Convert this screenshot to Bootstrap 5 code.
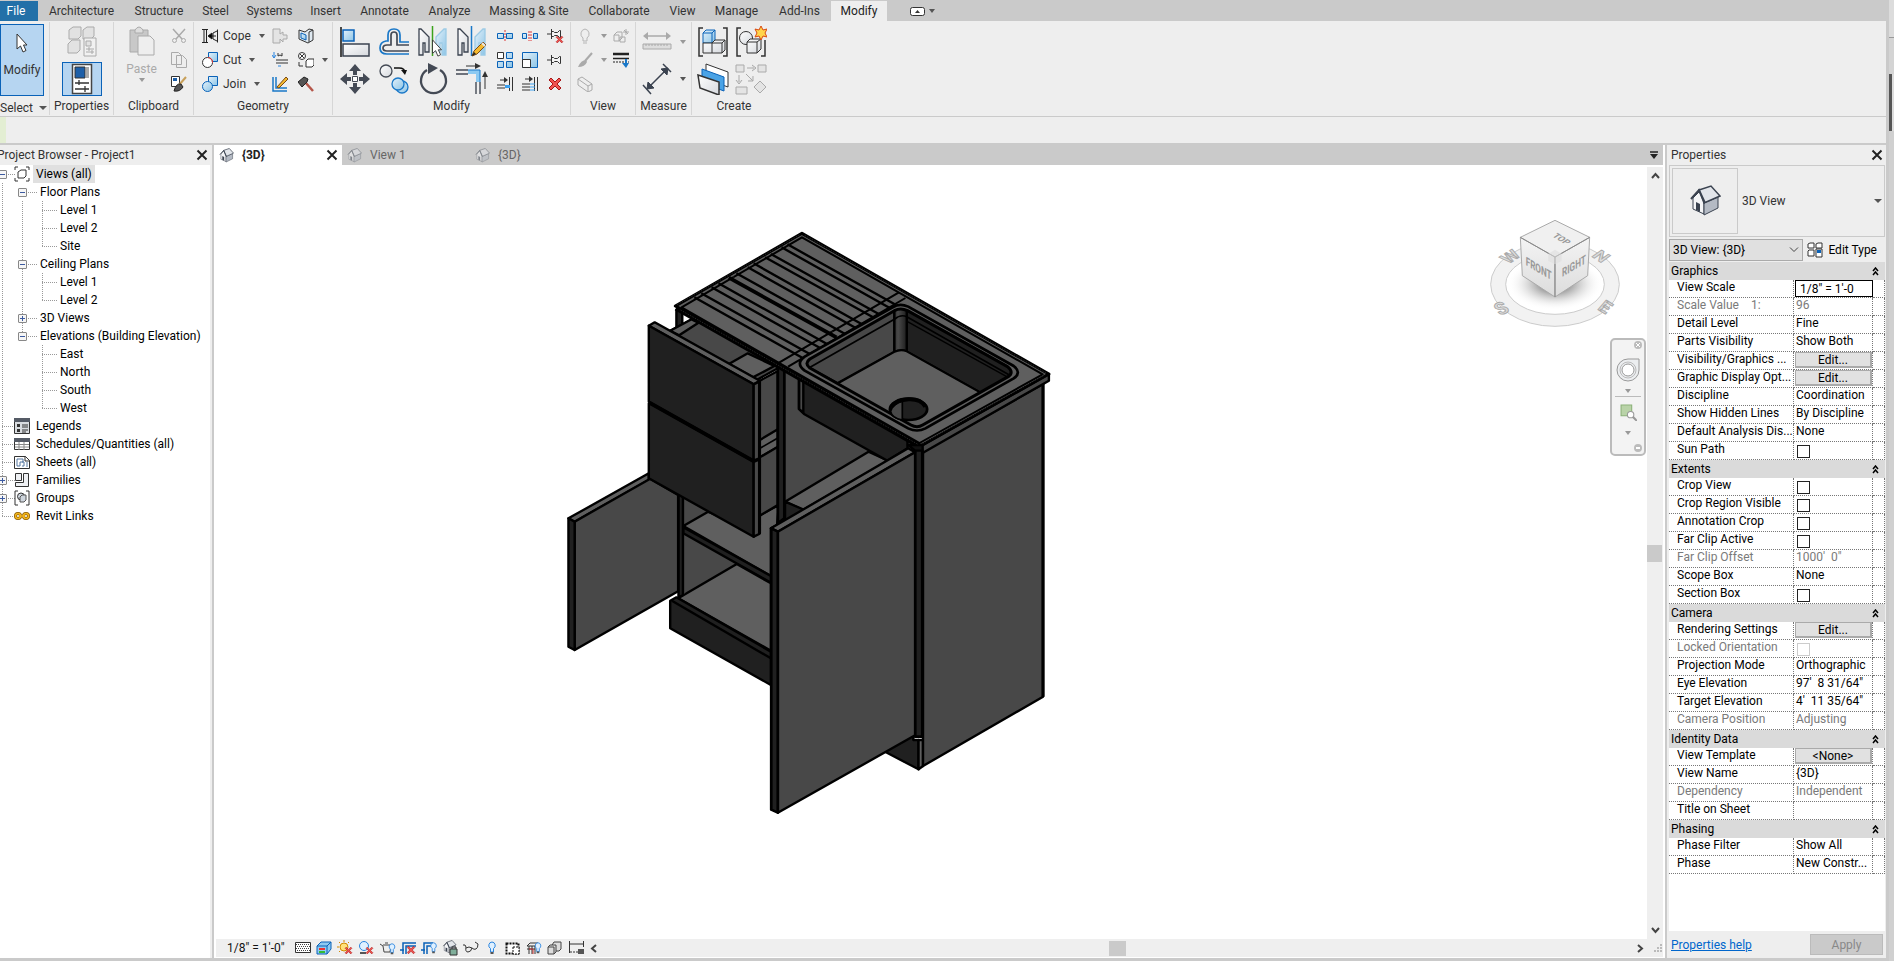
<!DOCTYPE html>
<html lang="en">
<head>
<meta charset="utf-8">
<meta name="viewport" content="width=device-width, initial-scale=1">
<title>Project1 - 3D View: {3D}</title>
<link href="https://cdn.jsdelivr.net/npm/bootstrap@5.3.0/dist/css/bootstrap.min.css" rel="stylesheet">
<style>
:root{--line:#cacaca;--chrome:#eee;--ink:#333}
body{font-family:Roboto,"Noto Sans",sans-serif;font-size:12px;line-height:18px;color:var(--ink);background:var(--line);overflow:hidden}
button{font:inherit;color:inherit;background:none;border:0;padding:0}
svg{display:block;flex:none}
.edge{width:8px;background:#dcdcdc;border-left:3px solid var(--line)}
.edge-top{height:38px;border-bottom:1px solid #999}
.edge-mid{height:36px;background:#d4d4d4}
.edge-thumb{width:3px;height:57px;background:#555}
.edge-rest{background:#d0d0d0}
/* menu tabs */
.menu-tabs{display:grid;grid-template-columns:38px 87px 68px 45px 63px 49px 69px 61px 98px 82px 45px 63px 63px 56px 64px;height:21px;background:var(--line);padding-top:1px;justify-content:start}
.menu-tabs button{white-space:nowrap;line-height:20px}
.menu-tabs .file-tab{background:#2270a8;color:#fff;padding-right:6px}
.menu-tabs .current{background:var(--chrome);color:#222}
/* ribbon */
.ribbon{height:96px;background:var(--chrome);border-bottom:1px solid var(--line)}
.rpanel{border-right:1px solid #d6d6d6;margin-top:1px;height:93px}
.rpanel:last-child{border:0}
.rbody{height:75px}
.rlabel{height:18px;text-align:center;white-space:nowrap}
.w49{width:50px}.w63{width:64px}.w80{width:80px}.w139{width:139px}.w238{width:238px}.w65{width:65px}.w56{width:56px}.w86{width:84px}
.rows3{display:grid;grid-auto-rows:24px;padding-top:2px;align-items:center;justify-items:start}
.rows2{display:grid;grid-auto-rows:37px;padding-top:1px;align-items:center;justify-items:center}
.gap6{padding-left:6px}
.gap2{padding-left:2px}
.tool{display:flex;align-items:center;gap:5px;white-space:nowrap}
.tool .caret{margin-left:3px}
.picked{border:1px solid #0a62b8;background:#b6d5f1}
.mod-btn{width:44px;height:72px;margin-top:2px}
.paste-btn{width:53px;padding-left:2px}
.faded{color:#aaa}
.caret{display:inline-block;border:3px solid transparent;border-top:4px solid #555;border-bottom:0}
.caret.wide{border-left-width:4px;border-right-width:4px;vertical-align:2px}
.faded .caret{border-top-color:#999}
.options{height:28px;background:var(--chrome);border-bottom:2px solid var(--line)}
.options i{display:block;width:6px;height:26px;background:#e3eed3}
.cols-geo{grid-template-columns:70px 26px 1fr}
.cols-big{grid-template-columns:repeat(4,39px)}
.cols-small{grid-template-columns:repeat(3,25px)}
.cols-view{grid-template-columns:36px 1fr}
.cols-create{grid-template-columns:repeat(2,38px)}
/* side panels */
.browser{width:214px;background:#fff;border-right:2px solid var(--line);flex:none}
.ptitle{height:20px;background:var(--chrome);line-height:20px;color:var(--ink)}
.tree-wrap{border-right:2px solid var(--chrome)}
.tree{color:#000;list-style:none;margin:0;padding:0 0 0 2px}
.tree li{display:flex;height:18px;align-items:center;white-space:nowrap}
.cell0,.cell1,.cell2{height:18px;flex:none;display:flex;align-items:center}
.cell0,.cell1{width:20px}.cell2{width:18px}
.short{width:13px}
.v{background:repeating-linear-gradient(#999 0 1px,transparent 1px 2px) 0 0/1px 100% no-repeat}
.h{background:repeating-linear-gradient(90deg,#999 0 1px,transparent 1px 2px) 0 9px/15px 1px no-repeat}
.v.h{background:repeating-linear-gradient(#999 0 1px,transparent 1px 2px) 0 0/1px 100% no-repeat,repeating-linear-gradient(90deg,#999 0 1px,transparent 1px 2px) 0 9px/15px 1px no-repeat}
.v.h.stop{background-size:1px 50%,15px 1px}
.tog{width:9px;height:9px;margin-left:-4px;border:1px solid #888;border-radius:1px;background:linear-gradient(#3c5aa0,#3c5aa0) 1px 3px/5px 1px no-repeat,#f6f6f6;flex:none}
.tog.plus{background:linear-gradient(#3c5aa0,#3c5aa0) 1px 3px/5px 1px no-repeat,linear-gradient(#3c5aa0,#3c5aa0) 3px 1px/1px 5px no-repeat,#f6f6f6}
.tree b{font-weight:400;padding:0 3px;line-height:18px}
.tree .chosen{background:#e0e0e0}
.tree svg{width:16px;height:16px;margin:0 3px 0 -1px}
/* drawing area */
.vtabs{height:20px;background:var(--line);margin-right:2px}
.vtab{width:128px;height:20px;padding:0 9px 0 5px;color:#666}
.vtab.on{background:#fff;color:#222;padding-right:4px}
.vtab .name{margin-left:8px}
.canvas{position:relative;background:#fff;min-height:0}
.model{position:absolute;left:351px;top:62px}
.cube{position:absolute;right:26px;top:52px}
.navbox{position:absolute;right:1px;top:173px;width:36px;height:118px;border:2px solid #bbb;border-radius:5px;background:#f3f3f3}
.vscroll{width:16px;background:#efefef;margin:2px 2px 0 0}
.vthumb{height:17px;width:15px;background:#cacaca}
.viewbar{height:18px;background:#efefef;color:#111;margin:0 2px 1px 2px}
.viewbar .scale{width:68px;margin-left:11px;text-align:left;white-space:nowrap}
.viewbar .ic{width:21px}
.hthumb{width:17px;height:15px;background:#cacaca}
/* properties */
.props{width:221px;background:var(--chrome);border-left:2px solid var(--line);flex:none;color:#000;padding:0 1px 0 2px}
.props .ptitle,.pfoot{padding:0 2px}
.ptype{height:72px;border:1px solid var(--line);padding:2px;color:var(--ink)}
.pthumb{width:66px;height:66px;border:1px solid var(--line)}
.psel-row{height:25px}
.pselect{width:134px;height:22px;border:1px solid #aaa;background:#e0e0e0 url("data:image/svg+xml,%3Csvg xmlns='http://www.w3.org/2000/svg' width='10' height='6'%3E%3Cpath d='M1 .5l4 4 4-4' fill='none' stroke='%23444'/%3E%3C/svg%3E") no-repeat right 3px center;appearance:none;line-height:20px;padding:0 3px;border-radius:0}
.grid-box{background:#fff}
.ptab{width:100%;table-layout:fixed;border-collapse:separate;border-spacing:0;background:#fff}
.c-name{width:125px}.c-pin{width:12px}
.ptab th,.ptab td{height:18px;padding:0;line-height:15px;font-weight:400;white-space:nowrap;vertical-align:top}
.ptab .grp th{background:#dadada;padding:0 6px 0 2px;line-height:18px;border:0}
.ptab tbody tr:not(.grp)>*{border-bottom:1px dotted #777;border-right:1px dotted #777}
.ptab tr:not(.grp) th{padding-left:8px}
.ptab td{padding-left:2px}
.ptab .off{color:#7a7a7a}
.ptab td.ctl{padding:0 0 0 1px}
.ebtn{display:block;width:77px;height:16px;line-height:14px;background:#e1e1e1;border:1px solid #aaa;border-right-width:2px;border-bottom-width:2px}
.vsel{display:block;width:78px;height:17px;border:1px solid #000;background:#fff;padding:0 4px;line-height:14px;color:#000;border-radius:0}
.ptab input[type=checkbox]{display:block;appearance:none;width:13px;height:13px;border:1px solid #222;margin:3px 0 0 2px;background:#fff}
.ptab input[type=checkbox]:disabled{border-color:#ccc}
.pfoot{height:27px}
.pfoot a{color:#06c}
.apply{width:73px;height:21px;background:#cacaca;border:1px solid #bbb;color:#888}
.status{height:3px;background:var(--line)}
.min0{min-width:0;min-height:0}
</style>
</head>
<body>
<svg width="0" height="0" class="position-absolute" aria-hidden="true">
<defs>
<linearGradient id="gb" x1="0" y1="0" x2="1" y2="1"><stop offset="0" stop-color="#e4f1fa"/><stop offset="1" stop-color="#8cc4e6"/></linearGradient>
<linearGradient id="gw" x1="0" y1="0" x2="1" y2="1"><stop offset="0" stop-color="#fff"/><stop offset="1" stop-color="#d5d8dd"/></linearGradient>
<linearGradient id="corner"><stop offset="0" stop-color="#333"/><stop offset=".3" stop-color="#4a4a4a"/><stop offset="1" stop-color="#1c1c1c"/></linearGradient>
<radialGradient id="shade"><stop offset=".3" stop-color="#999"/><stop offset="1" stop-color="#fff" stop-opacity="0"/></radialGradient>
<linearGradient id="cf" x1="0" y1="0" x2="0" y2="1"><stop offset="0" stop-color="#f4f4f4"/><stop offset="1" stop-color="#dcdcdc"/></linearGradient>
<symbol id="x" viewBox="0 0 12 12"><path d="M1.500 1.500l9 9M10.500 1.500l-9 9" stroke="#222" stroke-width="2" fill="none"/></symbol>
<symbol id="house" viewBox="0 0 32 32"><path d="M4 13l7-7 4 8v15L4 24z" fill="#f4f5f7" stroke="#3b4350"/><path d="M15 18l14-6v11l-14 7z" fill="#b4bac4" stroke="#3b4350"/><path d="M10 5l12-4 9 10-16 7z" fill="#e2e5ea" stroke="#3b4350" stroke-width="1.500"/><path d="M2 14l8-9 6 13" fill="none" stroke="#3b4350" stroke-width="2"/><path d="M7 17l4 2v8l-4-2z" fill="#3b4350"/></symbol>
<symbol id="align" viewBox="0 0 32 32"><path d="M2 1v30" stroke="#111" stroke-width="1.500"/><path d="M4 4h11v11H4z" fill="url(#gb)" stroke="#0a62b8" stroke-width="1.500"/><path d="M4 18h26v12H4z" fill="url(#gw)" stroke="#3b4350" stroke-width="1.500"/></symbol>
<symbol id="offset" viewBox="0 0 32 32" fill="none"><path d="M31 16h-9V9q0-6-6-6t-6 6v6H8q-6 1-6 7t7 6h22" stroke="#1a78c8" stroke-width="1.700"/><path d="M31 19H19V9q0-3-3-3t-3 3v10H9q-4 0-4 3t4 3h22" stroke="#444a55" stroke-width="1.700"/></symbol>
<symbol id="mirror" viewBox="0 0 32 32"><path d="M2 3h2l8 8v15H8v-9H6v12H2z" fill="url(#gw)" stroke="#3b4350" stroke-width="1.300"/><path d="M29 3h-2l-8 8v15h4v-9h2v12h4z" fill="url(#gb)" stroke="#9ccbe6" stroke-width="1.300"/></symbol>
<symbol id="cursor" viewBox="0 0 12 20"><path d="M1 1v15l3.500-3 2.500 6 3-1.500L7.500 12H11z" fill="#fff" stroke="#333"/></symbol>
<symbol id="pencil" viewBox="0 0 16 16"><path d="M1 15l2-5 9-9 3 3-9 9z" fill="#f5b92e" stroke="#7a4a16"/><path d="M11 2l3 3" stroke="#e6e6e6" stroke-width="2"/><path d="M1 15l2-4 2 2z" fill="#222"/></symbol>
<symbol id="move" viewBox="0 0 32 32"><path d="M16 1l6 7h-4v4h-4V8h-4zM16 31l6-7h-4v-4h-4v4h-4zM1 16l7-6v4h4v4H8v4zM31 16l-7-6v4h-4v4h4v4z" fill="#444a55"/><path d="M13.500 13.500h5v5h-5z" fill="#fff" stroke="#444a55"/></symbol>
<symbol id="copyt" viewBox="0 0 32 32"><circle cx="8" cy="8" r="6" fill="url(#gw)" stroke="#444a55" stroke-width="1.300"/><path d="M16 5h5q6 0 6 5" fill="none" stroke="#111" stroke-width="1.500"/><path d="M23 7h6l-2 5z" fill="#111"/><circle cx="24" cy="24" r="6" fill="url(#gb)" stroke="#1a78c8" stroke-width="1.300"/><circle cx="20" cy="21" r="6" fill="url(#gb)" stroke="#1a78c8" stroke-width="1.300"/></symbol>
<symbol id="rotate" viewBox="0 0 32 32"><path d="M10 7A12.500 12.500 0 1 0 23 7" fill="none" stroke="#444a55" stroke-width="2.300"/><path d="M11 0l10 5-10 6z" fill="#444a55"/></symbol>
<symbol id="trim" viewBox="0 0 32 32" fill="none"><path d="M10 3h12M29 14v12" stroke="#333"/><path d="M19 0l6 3-6 3zM29 8l3 6h-6z" fill="#333"/><path d="M0 7h12M0 11h12M20 19v12M24 19v12" stroke="#444a55" stroke-width="1.400"/><path d="M12 9h10v10" stroke="#8ccaf2" stroke-width="4"/><path d="M12 7h12v12" stroke="#1a78c8"/></symbol>
<symbol id="split" viewBox="0 0 16 16"><path d="M.5 5.500h6v5h-6zM9.500 5.500h6v5h-6z" fill="url(#gb)" stroke="#0a62b8"/><path d="M8 2v12" stroke="#d33" stroke-dasharray="2 1"/></symbol>
<symbol id="splitg" viewBox="0 0 16 16"><path d="M.5 5.500h4v5h-4zM11.500 5.500h4v5h-4z" fill="url(#gb)" stroke="#0a62b8"/><path d="M7 3v10M9 3v10" stroke="#d33" stroke-dasharray="2 1"/></symbol>
<symbol id="pin" viewBox="0 0 16 16"><path d="M0 8h4M4.500 3v10M4.500 5.500h2l1 1h3l2-2h1v7h-1l-2-2h-3l-1 1h-2" fill="#f4f4f4" stroke="#333"/></symbol>
<symbol id="redx" viewBox="0 0 16 16"><path d="M2 4l2-2 4 4 4-4 2 2-4 4 4 4-2 2-4-4-4 4-2-2 4-4z" fill="#ef5350" stroke="#a81515"/></symbol>
<symbol id="array" viewBox="0 0 16 16"><path d="M.5.500h6v6h-6z" fill="#fff" stroke="#333"/><path d="M9.500.500h6v6h-6zM.5 9.500h6v6h-6zM9.500 9.500h6v6h-6z" fill="url(#gb)" stroke="#0a62b8"/></symbol>
<symbol id="scale" viewBox="0 0 16 16"><path d="M.5.500h15v15H.500z" fill="url(#gb)" stroke="#0a62b8"/><path d="M.5 7.500h8v8h-8z" fill="#fff" stroke="#333"/></symbol>
<symbol id="ext" viewBox="0 0 16 16"><path d="M3 4h6M12.500 1v14M15.500 1v14M0 9h8M0 12h8" stroke="#333"/><path d="M7 1l4 3-4 3z" fill="#333"/><path d="M8 10.500h5" stroke="#3aa0f0" stroke-width="3"/></symbol>
<symbol id="ext2" viewBox="0 0 16 16"><path d="M3 3h6M12.500 1v14M15.500 1v14M0 8h8M0 11h8M0 14h8" stroke="#333"/><path d="M7 0l4 3-4 3z" fill="#333"/><path d="M8 8h5M8 11h5M8 14h5" stroke="#3aa0f0"/></symbol>
<symbol id="boxes" viewBox="0 0 32 32" fill="#e2e2e2" stroke="#aaa"><path d="M3 4l4-3h8v9l-3 3H3zM17 4l4-3h7v9l-3 3h-8zM2 18l4-4h8v10l-3 3H2z"/><path d="M18 12h12v18H18z" fill="#f1f1f1"/><path d="M20 15h5v5h-5zM20 23h8M20 26h8M23 21v4M26 24v4"/></symbol>
<symbol id="propi" viewBox="0 0 22 32"><path d="M1.500 1.500h19v29h-19z" fill="#fff" stroke="#444" stroke-width="1.500"/><path d="M4 4h10v11H4z" fill="#1d5fa8" stroke="#333"/><path d="M15 4h3v11h-3z" fill="#aaa"/><path d="M4 20h14M4 26h14M8 17v5M14 23v6" stroke="#333" stroke-width="1.300"/></symbol>
<symbol id="paste" viewBox="0 0 26 30"><path d="M1 4h18v22H1z" fill="#c8c8c8" stroke="#aaa"/><path d="M6 4q4-6 8 0v3H6z" fill="#ddd" stroke="#aaa"/><path d="M9 10h12l4 4v15H9z" fill="#eee" stroke="#aaa"/></symbol>
<symbol id="cut" viewBox="0 0 16 16" fill="none" stroke="#aaa"><path d="M2 1l9 10M14 1L5 11" stroke-width="1.500"/><circle cx="3.500" cy="12.500" r="2"/><circle cx="12.500" cy="12.500" r="2"/></symbol>
<symbol id="copy" viewBox="0 0 16 16"><path d="M.5.500h7l3 3v9h-10zM5.500 3.500h6l4 4v8h-10z" fill="#eee" stroke="#aaa"/></symbol>
<symbol id="match" viewBox="0 0 16 16"><path d="M.5.500h8v10h-8z" fill="#fff" stroke="#333"/><path d="M2 2h4v3H2z" fill="#1d5fa8"/><path d="M15 1L8 9" stroke="#c8a05a" stroke-width="2"/><path d="M10 8q-5-1-7 7 6 1 9-4z" fill="#555" stroke="#222"/></symbol>
<symbol id="cope" viewBox="0 0 16 16" fill="none" stroke="#222"><path d="M0 1.500h6M0 14.500h6M2 2v12M4.500 2v12M8 8h6"/><path d="M15.500 1.500v13M15 3l-4 2v6l4 2"/><path d="M6 8l4-3v6z" fill="#000"/></symbol>
<symbol id="cutg" viewBox="0 0 16 16"><path d="M6.500.500h9v9h-9z" fill="url(#gb)" stroke="#0a62b8"/><circle cx="5.500" cy="10.500" r="5" fill="#fff" stroke="#333"/><path d="M6 5.500a5 5 0 0 1 4.500 5" fill="none" stroke="#e33"/></symbol>
<symbol id="join" viewBox="0 0 16 16"><path d="M6.500.500h9v9h-9z" fill="url(#gb)" stroke="#0a62b8"/><circle cx="5.500" cy="10.500" r="5" fill="url(#gb)" stroke="#0a62b8"/></symbol>
<symbol id="g1" viewBox="0 0 16 16"><path d="M1 1h7v5l3-2v3h4v4h-4v3l-3-3v4H1z" fill="#e4e4e4" stroke="#aaa"/></symbol>
<symbol id="g2" viewBox="0 0 16 16" fill="none"><path d="M2 0v6M0 3l2 3 2-3M6 14h3" stroke="#2a85e0"/><path d="M6 1v3l2-1 2 1V1M4 8h12M4 11h12" stroke="#333"/></symbol>
<symbol id="g3" viewBox="0 0 16 16"><path d="M1 1v14h14M4 1v11h11" fill="none" stroke="#1a78c8" stroke-width="1.500"/><path d="M5 11L14 1l2 2L7 12z" fill="#f5b92e" stroke="#7a4a16"/></symbol>
<symbol id="g4" viewBox="0 0 16 16"><path d="M1 2l6 2 4-3 4 1v10l-5 3-9-4z" fill="#dfe9f1" stroke="#333"/><path d="M11 4v10M11 4l4-2" stroke="#333" fill="none"/><path d="M3 5l5 2v5l-5-2z" fill="url(#gb)" stroke="#0a62b8"/></symbol>
<symbol id="g5" viewBox="0 0 16 16"><circle cx="4" cy="4" r="3.500" fill="#fff" stroke="#333"/><path d="M2 2l4 4M6 2L2 6M1 10v4h4" stroke="#333" fill="none"/><path d="M8 9l2-2h6v6l-2 2H8z" fill="#fff" stroke="#333"/></symbol>
<symbol id="hammer" viewBox="0 0 16 16"><path d="M7 6l8 9" stroke="#b5564a" stroke-width="2.500"/><path d="M0 6l6-5 4 2-1 3-5 5z" fill="#555" stroke="#222"/></symbol>
<symbol id="bulb" viewBox="0 0 16 16"><path d="M8 1a5 5 0 0 1 2 9v3H6v-3a5 5 0 0 1 2-9zM6 15h4" fill="#eee" stroke="#b5b5b5"/></symbol>
<symbol id="brush" viewBox="0 0 16 16"><path d="M15 1L8 9" stroke="#aaa" stroke-width="2"/><path d="M9 8q-5 0-8 7 7 0 9-5z" fill="#aaa"/></symbol>
<symbol id="gbox" viewBox="0 0 16 16"><path d="M1 3l4-2 10 7v6l-4 2L1 9zM1 3l10 7v6M11 10l4-2" fill="#eee" stroke="#aaa"/></symbol>
<symbol id="gbox2" viewBox="0 0 16 16"><path d="M1 7l3-3h5v6l-3 3H1zM1 7h5v6M7 9h5v5H7zM13 1v6M10 4h6M11 2l4 4" fill="none" stroke="#aaa"/></symbol>
<symbol id="thin" viewBox="0 0 16 16"><path d="M0 2h16" stroke="#222" stroke-width="2.500"/><path d="M0 6.500h16" stroke="#222" stroke-width="1.500"/><path d="M0 10h16" stroke="#222" stroke-dasharray="2 1"/><path d="M12 7v4h-3l4 5 3-5h-2V7z" fill="#1a78c8"/></symbol>
<symbol id="ruler" viewBox="0 0 30 32"><path d="M3 10h24" stroke="#aaa" stroke-width="1.500"/><path d="M6 6l-5 4 5 4zM24 6l5 4-5 4z" fill="#aaa"/><path d="M1 18h28v5H1z" fill="#ddd" stroke="#aaa"/><path d="M4 18v2M7 18v2M10 18v2M13 18v2M16 18v2M19 18v2M22 18v2M25 18v2" stroke="#aaa"/></symbol>
<symbol id="dim" viewBox="0 0 30 32" stroke="#3b4350"><path d="M6 25L25 6M1 22l8 9M21 1l8 8" fill="none" stroke-width="1.500"/><path d="M5 26l1-7 6 6zM26 5l-7 1 6 6z" fill="#3b4350"/></symbol>
<symbol id="c1" viewBox="0 0 32 32"><path d="M6 2H2v28h4M26 2h4v28h-4" fill="none" stroke="#333" stroke-width="1.500"/><path d="M6 7l3-3h9v10l-3 3H6z" fill="url(#gb)" stroke="#0a62b8"/><path d="M6 7h9v10M15 7l3-3" fill="none" stroke="#0a62b8"/><path d="M6 17h9l3-3h10v10l-3 3H6z" fill="url(#gw)" stroke="#333"/><path d="M15 17v10M15 17h10v10M25 17l3-3" fill="none" stroke="#333"/></symbol>
<symbol id="c2" viewBox="0 0 32 32"><path d="M6 2H2v28h4M26 30h4V14" fill="none" stroke="#333" stroke-width="1.500"/><circle cx="11" cy="12" r="6.500" fill="url(#gw)" stroke="#333"/><path d="M12 16l3-3h11v10l-4 4H12zM12 16h10v11M22 16l4-3" fill="url(#gw)" stroke="#333"/><path d="M26 0l2 4 4-1-2 4 2 4-4-1-2 4-2-4-4 1 2-4-2-4 4 1z" fill="#ffd54a" stroke="#d9480f"/></symbol>
<symbol id="c3" viewBox="0 0 32 32"><path d="M9 1l22 8v15L9 16z" fill="#fff" stroke="#333"/><path d="M5 6l22 8v14L5 20z" fill="#4aa3e6" stroke="#0a62b8"/><path d="M1 12l21 7v13L3 25z" fill="url(#gw)" stroke="#333" stroke-width="1.500"/></symbol>
<symbol id="c4" viewBox="0 0 32 32" fill="#e4e4e4" stroke="#aaa"><path d="M1 2h8v7H1zM23 2h8v7h-8zM1 24h11v7H1zM25 18l6 6-6 6-6-6zM12 5h7M17 2l4 3-4 3M4 12v7M1 17l3 4 3-4M11 11l7 7M18 13v5h-5"/></symbol>
<symbol id="magbox" viewBox="0 0 16 16"><path d="M1 1h10v10H1z" fill="#b9d3a8" stroke="#8bb178"/><circle cx="10" cy="10" r="3" fill="#fff" stroke="#999"/><path d="M12 12l4 4" stroke="#999" stroke-width="2"/></symbol>
<symbol id="sbulb" viewBox="0 0 16 16"><path d="M8 2a3.500 3.500 0 0 1 1.500 6.500V12h-3V8.500A3.500 3.500 0 0 1 8 2z" fill="#dff0ff" stroke="#2a85e0"/><path d="M6.500 12h3v2h-3z" fill="#555"/></symbol>
</defs>
</svg>

<div class="d-flex vh-100">
<div class="d-flex flex-column flex-fill min0">

<nav class="menu-tabs" aria-label="Ribbon tabs">
<button class="file-tab">File</button><button>Architecture</button><button>Structure</button><button>Steel</button><button>Systems</button><button>Insert</button><button>Annotate</button><button>Analyze</button><button>Massing &amp; Site</button><button>Collaborate</button><button>View</button><button>Manage</button><button>Add-Ins</button><button class="current">Modify</button>
<button class="d-flex align-items-center justify-content-end gap-1 pe-3" aria-label="Minimize ribbon"><svg width="15" height="9"><rect x=".5" y=".5" width="14" height="8" rx="2" fill="#fff" stroke="#333"/><path d="M5 6l2.500-3L10 6z" fill="#333"/></svg><span class="caret"></span></button>
</nav>

<div class="ribbon d-flex">
  <section class="rpanel w49">
    <div class="rbody"><button class="picked mod-btn d-flex flex-column align-items-center"><svg class="mt-2" width="12" height="20"><use href="#cursor"/></svg><span class="tool mt-2">Modify</span></button></div>
    <div class="rlabel text-start">Select &nbsp;<span class="caret wide"></span></div>
  </section>
  <section class="rpanel w63">
    <div class="rbody rows2"><button aria-label="Type properties"><svg width="32" height="32"><use href="#boxes"/></svg></button><button class="picked px-2" aria-label="Properties"><svg width="22" height="32"><use href="#propi"/></svg></button></div>
    <div class="rlabel">Properties</div>
  </section>
  <section class="rpanel w80">
    <div class="rbody d-flex">
      <button class="paste-btn faded d-flex flex-column align-items-center pt-1"><svg width="26" height="30"><use href="#paste"/></svg><span class="tool mt-1">Paste</span><span class="caret"></span></button>
      <div class="rows3 ps-1"><button aria-label="Cut"><svg width="16" height="16"><use href="#cut"/></svg></button><button aria-label="Copy"><svg width="16" height="16"><use href="#copy"/></svg></button><button aria-label="Match type"><svg width="16" height="16"><use href="#match"/></svg></button></div>
    </div>
    <div class="rlabel">Clipboard</div>
  </section>
  <section class="rpanel w139">
    <div class="rbody rows3 cols-geo ps-2">
      <button class="tool"><svg width="16" height="16"><use href="#cope"/></svg>Cope <span class="caret"></span></button><button aria-label="Wall joins"><svg width="16" height="16"><use href="#g1"/></svg></button><button aria-label="Split face"><svg width="16" height="16"><use href="#g4"/></svg></button>
      <button class="tool"><svg width="16" height="16"><use href="#cutg"/></svg>Cut <span class="caret"></span></button><button aria-label="Beam joins"><svg width="16" height="16"><use href="#g2"/></svg></button><button class="tool" aria-label="Paint"><svg width="16" height="16"><use href="#g5"/></svg><span class="caret"></span></button>
      <button class="tool"><svg width="16" height="16"><use href="#join"/></svg>Join <span class="caret"></span></button><button aria-label="Edit joins"><svg width="16" height="16"><use href="#g3"/></svg></button><button aria-label="Demolish"><svg width="16" height="16"><use href="#hammer"/></svg></button>
    </div>
    <div class="rlabel">Geometry</div>
  </section>
  <section class="rpanel w238">
    <div class="rbody d-flex">
      <div class="rows2 cols-big gap2">
        <button aria-label="Align"><svg width="32" height="32"><use href="#align"/></svg></button><button aria-label="Offset"><svg width="32" height="32"><use href="#offset"/></svg></button>
        <button aria-label="Mirror, pick axis"><svg width="32" height="32"><use href="#mirror"/><path d="M15.500 0v30" stroke="#3ba31c" stroke-width="1.500"/><use href="#cursor" x="14" y="13" width="12" height="18"/></svg></button>
        <button aria-label="Mirror, draw axis"><svg width="32" height="32"><use href="#mirror"/><path d="M15.500 0v30" stroke="#1a78c8" stroke-width="1.500"/><use href="#pencil" x="15" y="15" width="16" height="16"/></svg></button>
        <button aria-label="Move"><svg width="32" height="32"><use href="#move"/></svg></button><button aria-label="Copy"><svg width="32" height="32"><use href="#copyt"/></svg></button><button aria-label="Rotate"><svg width="32" height="32"><use href="#rotate"/></svg></button><button aria-label="Trim"><svg width="32" height="32"><use href="#trim"/></svg></button>
      </div>
      <div class="rows3 cols-small gap6">
        <button aria-label="Split"><svg width="16" height="16"><use href="#split"/></svg></button><button aria-label="Split with gap"><svg width="16" height="16"><use href="#splitg"/></svg></button><button aria-label="Unpin"><svg width="17" height="16"><use href="#pin" y="-2" width="16" height="16"/><use href="#redx" x="8" y="7" width="9" height="9"/></svg></button>
        <button aria-label="Array"><svg width="16" height="16"><use href="#array"/></svg></button><button aria-label="Scale"><svg width="16" height="16"><use href="#scale"/></svg></button><button aria-label="Pin"><svg width="16" height="16"><use href="#pin"/></svg></button>
        <button aria-label="Extend single"><svg width="16" height="16"><use href="#ext"/></svg></button><button aria-label="Extend multiple"><svg width="16" height="16"><use href="#ext2"/></svg></button><button aria-label="Delete"><svg width="16" height="16"><use href="#redx"/></svg></button>
      </div>
    </div>
    <div class="rlabel">Modify</div>
  </section>
  <section class="rpanel w65">
    <div class="rbody rows3 cols-view gap6">
      <button class="tool faded" aria-label="Hide"><svg width="16" height="16"><use href="#bulb"/></svg><span class="caret"></span></button><button aria-label="Selection box"><svg width="16" height="16"><use href="#gbox2"/></svg></button>
      <button class="tool faded" aria-label="Override"><svg width="16" height="16"><use href="#brush"/></svg><span class="caret"></span></button><button aria-label="Linework"><svg width="16" height="16"><use href="#thin"/></svg></button>
      <button aria-label="Displace"><svg width="16" height="16"><use href="#gbox"/></svg></button>
    </div>
    <div class="rlabel">View</div>
  </section>
  <section class="rpanel w56">
    <div class="rbody rows2"><button class="tool faded" aria-label="Measure"><svg width="30" height="32"><use href="#ruler"/></svg><span class="caret"></span></button><button class="tool" aria-label="Dimension"><svg width="30" height="32"><use href="#dim"/></svg><span class="caret"></span></button></div>
    <div class="rlabel">Measure</div>
  </section>
  <section class="rpanel w86">
    <div class="rbody rows2 cols-create gap2"><button aria-label="Create assembly"><svg width="32" height="32"><use href="#c1"/></svg></button><button aria-label="Create group"><svg width="32" height="32"><use href="#c2"/></svg></button><button aria-label="Create similar"><svg width="32" height="32"><use href="#c3"/></svg></button><button aria-label="Create parts"><svg width="32" height="32"><use href="#c4"/></svg></button></div>
    <div class="rlabel">Create</div>
  </section>
</div>
<div class="options"><i></i></div>

<main class="d-flex flex-fill min0">
<aside class="browser d-flex flex-column">
  <div class="ptitle d-flex align-items-center justify-content-between pe-1"><span style="text-indent:-3px">Project Browser - Project1</span><button aria-label="Close"><svg width="12" height="12"><use href="#x"/></svg></button></div>
  <div class="tree-wrap flex-fill">
  <ul class="tree">
    <li><span class="cell0 short h"><i class="tog"></i></span><svg viewBox="0 0 16 16"><path d="M4 1H1v3M12 1h3v3M4 15H1v-3M12 15h3v-3" fill="none" stroke="#333"/><path d="M4 6l3-2h5v6l-2 2H4z" fill="#fff" stroke="#333"/></svg><b class="chosen">Views (all)</b></li>
    <li><span class="cell0 v"></span><span class="cell2 h"><i class="tog"></i></span><b class="ps-0">Floor Plans</b></li>
    <li><span class="cell0 v"></span><span class="cell1 v"></span><span class="cell2 v h"></span><b class="ps-0">Level 1</b></li>
    <li><span class="cell0 v"></span><span class="cell1 v"></span><span class="cell2 v h"></span><b class="ps-0">Level 2</b></li>
    <li><span class="cell0 v"></span><span class="cell1 v"></span><span class="cell2 v h stop"></span><b class="ps-0">Site</b></li>
    <li><span class="cell0 v"></span><span class="cell2 v h"><i class="tog"></i></span><b class="ps-0">Ceiling Plans</b></li>
    <li><span class="cell0 v"></span><span class="cell1 v"></span><span class="cell2 v h"></span><b class="ps-0">Level 1</b></li>
    <li><span class="cell0 v"></span><span class="cell1 v"></span><span class="cell2 v h stop"></span><b class="ps-0">Level 2</b></li>
    <li><span class="cell0 v"></span><span class="cell2 v h"><i class="tog plus"></i></span><b class="ps-0">3D Views</b></li>
    <li><span class="cell0 v"></span><span class="cell2 v h stop"><i class="tog"></i></span><b class="ps-0">Elevations (Building Elevation)</b></li>
    <li><span class="cell0 v"></span><span class="cell1"></span><span class="cell2 v h"></span><b class="ps-0">East</b></li>
    <li><span class="cell0 v"></span><span class="cell1"></span><span class="cell2 v h"></span><b class="ps-0">North</b></li>
    <li><span class="cell0 v"></span><span class="cell1"></span><span class="cell2 v h"></span><b class="ps-0">South</b></li>
    <li><span class="cell0 v"></span><span class="cell1"></span><span class="cell2 v h stop"></span><b class="ps-0">West</b></li>
    <li><span class="cell0 short v h"></span><svg viewBox="0 0 16 16"><path d="M.5.500h15v15H.500z" fill="#d9dce0" stroke="#333"/><path d="M0 0h16v4H0z" fill="#555b66"/><path d="M3 6h3v3H3zM3 11h3v3H3z" fill="#333"/><path d="M8 7h6M8 9h6M8 12h6M8 14h4" stroke="#333"/></svg><b>Legends</b></li>
    <li><span class="cell0 short v h"></span><svg viewBox="0 0 16 16"><path d="M.5 2.500h15v11H.500z" fill="#fff" stroke="#333"/><path d="M0 2h16v4H0z" fill="#555b66"/><path d="M1 8.500h14M1 11h14M5 6v8M10 6v8" stroke="#888"/></svg><b>Schedules/Quantities (all)</b></li>
    <li><span class="cell0 short v h"></span><svg viewBox="0 0 16 16"><path d="M.5 2.500h11l4 4v8H.500z" fill="#fff" stroke="#333"/><path d="M3 5h6v3H6v4H3zM8 8h2v4H8M13 8v5" fill="none" stroke="#5577a0"/><path d="M11 2v5h5" stroke="#333" fill="none"/></svg><b>Sheets (all)</b></li>
    <li><span class="cell0 short v h"><i class="tog plus"></i></span><svg viewBox="0 0 16 16"><path d="M1.500 1.500h6v7h-6zM9.500 1.500h5v13h-13v-4h8z" fill="#eef0f3" stroke="#333"/></svg><b>Families</b></li>
    <li><span class="cell0 short v h"><i class="tog plus"></i></span><svg viewBox="0 0 16 16"><path d="M4 1H1v14h3M12 1h3v14h-3" fill="none" stroke="#333"/><circle cx="7" cy="6.500" r="3.500" fill="#cfd6de" stroke="#333"/><path d="M6 7l2-2h4v5l-2 2H6z" fill="#cfd6de" stroke="#555"/></svg><b>Groups</b></li>
    <li><span class="cell0 short v h stop"></span><svg viewBox="0 0 16 16" fill="none"><g stroke="#8a5c00" stroke-width="3"><rect x="1.500" y="5.500" width="5" height="5" rx="2.500"/><rect x="9.500" y="5.500" width="5" height="5" rx="2.500"/></g><g stroke="#f2b41c" stroke-width="1.500"><rect x="1.500" y="5.500" width="5" height="5" rx="2.500"/><rect x="9.500" y="5.500" width="5" height="5" rx="2.500"/><path d="M5 8h6"/></g></svg><b>Revit Links</b></li>
  </ul>
  </div>
</aside>

<section class="d-flex flex-column flex-fill bg-white min0">
  <div class="vtabs d-flex align-items-center">
    <div class="vtab on d-flex align-items-center"><svg width="15" height="15"><use href="#house"/></svg><span class="name fw-bold">{3D}</span><button class="ms-auto" aria-label="Close view"><svg width="12" height="12"><use href="#x"/></svg></button></div>
    <button class="vtab d-flex align-items-center"><svg width="15" height="15" opacity=".5"><use href="#house"/></svg><span class="name">View 1</span></button>
    <button class="vtab d-flex align-items-center"><svg width="15" height="15" opacity=".5"><use href="#house"/></svg><span class="name">{3D}</span></button>
    <button class="ms-auto me-1" aria-label="View list"><svg width="10" height="8"><path d="M1 1h8" stroke="#222" stroke-width="1.500"/><path d="M1 3h8L5 8z" fill="#222"/></svg></button>
  </div>
  <div class="d-flex flex-fill min0">
    <div class="canvas flex-fill">
      <svg class="model" width="507" height="590" viewBox="75 51 1470 1770" preserveAspectRatio="none" role="img" aria-label="Kitchen sink cabinet, isometric view" stroke="#000" stroke-width="7" stroke-linejoin="round">
        <!-- right side and plinth -->
        <path d="M1003 1625L1085 1570V1590H1100V1678z" fill="#202020"/>
        <path d="M1100 1590H1113V1668L1100 1678z" fill="#5f5f5f"/>
        <path d="M1113 725L1461 522V1460L1113 1668z" fill="#484848"/>
        <path d="M1461 522V1460" stroke-width="9"/>
        <path d="M1090 710H1111V1580H1090z" fill="#202020" stroke-width="8"/>
        <!-- sink bay -->
        <path d="M713 480L1090 700V730L765 905L713 940z" fill="#484848" stroke="none"/>
        <path d="M713 875L955 725L1012 752L765 900z" fill="#5f5f5f"/>
        <path d="M713 875L770 900L713 940z" fill="#202020"/>
        <path d="M753 500L1068 690V715L1010 752L768 612L753 597z" fill="#202020"/>
        <path d="M754 510H766V608L754 597z" fill="#484848"/>
        <!-- lower left bay -->
        <path d="M418 850L690 880V1110L418 1150z" fill="#484848" stroke="none"/>
        <path d="M418 948L490 905L640 970V915L695 885L690 945L672 955V1098z" fill="#5f5f5f"/>
        <path d="M418 952L672 1098V1118L418 970z" fill="#202020"/>
        <path d="M403 1165L573 1062L672 1120V1322z" fill="#5f5f5f"/>
        <path d="M380 1172L398 1162L672 1325V1425L380 1255z" fill="#202020"/>
        <path d="M385 1172L672 1345" stroke-width="7"/>
        <path d="M404 850H417V1155L404 1162z" fill="#202020"/>
        <!-- small door -->
        <path d="M85 925L318 790V810L103 935z" fill="#5f5f5f"/>
        <path d="M103 935L322 806L403 855V1144L103 1320z" fill="#484848"/>
        <path d="M85 925L103 935V1320L85 1310z" fill="#202020"/>
        <!-- drawers -->
        <path d="M398 300H415V350L398 356z" fill="#202020"/>
        <path d="M380 362L450 325L700 470L622 515z" fill="#484848"/>
        <path d="M380 362L442 328L462 338L406 376z" fill="#5f5f5f"/>
        <path d="M550 462L605 430L682 468L620 502z" fill="#5f5f5f"/>
        <path d="M640 512L692 483V690L640 745z" fill="#484848"/>
        <path d="M640 690L692 658V712L640 742z" fill="#5f5f5f"/>
        <path d="M640 715L692 684" stroke-width="5"/>
        <path d="M640 742L692 710V885L640 917z" fill="#484848"/>
        <path d="M318 347L335 337L640 512L622 523z" fill="#5f5f5f"/>
        <path d="M318 347L622 523V752L318 575z" fill="#202020"/>
        <path d="M622 523L638 515V745L622 752z" fill="#484848"/>
        <path d="M318 580L622 756V980L318 805z" fill="#202020"/>
        <path d="M622 756L638 748V972L622 980z" fill="#484848"/>
        <path d="M320 577L622 753" stroke-width="10"/>
        <path d="M692 470H711V925L692 940z" fill="#202020" stroke-width="8"/>
        <!-- large door -->
        <path d="M672 955L1070 715L1090 727L692 965z" fill="#5f5f5f"/>
        <path d="M692 965L1090 727V1576L692 1808z" fill="#484848"/>
        <path d="M673 955L692 965V1808L673 1799z" fill="#202020" stroke-width="8"/>
        <!-- worktop -->
        <path d="M1108 708L1478 492V512L1113 728z" fill="#484848"/>
        <path d="M395 288L762 70L1478 492L1105 708z" fill="#5f5f5f" stroke-width="9"/>
        <path d="M413 292L762 82L1460 493L1103 699z" fill="none" stroke-width="6"/>
        <path d="M397 294L1107 711" stroke-width="15"/><path d="M1070 705H1112V722H1090z" fill="#111"/>
        <path d="M410 300L1100 704M400 284L758 73M770 76L1470 489M1112 700L1465 495" stroke="#777" stroke-width="1" stroke-dasharray="4 4"/>
        <path d="M1042 248L692 460M1062 264L722 470" stroke-width="6"/>
        <path d="M720 103L1035 285M703 112L1018 295M672 132L986 313M655 142L968 322M622 160L936 343M605 172L918 354M572 190L886 371M520 220L836 403M500 232L816 415M470 250L786 433M450 262L768 446" stroke-width="7"/>
        <path d="M550 203L862 382" stroke-width="11"/><path d="M562 200L870 376" stroke="#666" stroke-width="1" stroke-dasharray="4 3"/>
        <!-- bowl -->
        <path d="M1025 292Q1045 278 1070 290L1376 468Q1400 488 1376 505L1120 655Q1096 668 1070 655L770 482Q742 460 770 440z" fill="#5f5f5f" stroke-width="8"/>
        <clipPath id="bowl"><path d="M1030 302Q1048 292 1068 302L1358 470Q1378 487 1360 500L1112 645Q1096 655 1078 645L785 474Q768 460 785 447z"/></clipPath>
        <g clip-path="url(#bowl)">
          <path d="M760 460L1030 290V425L865 520z" fill="#484848"/>
          <path d="M1066 285L1400 480L1280 548L1066 425z" fill="#202020"/>
          <path d="M1030 285H1066V424Q1048 416 1030 426z" fill="url(#corner)"/>
          <path d="M865 521L1030 426Q1048 416 1066 424L1280 548L1095 665z" fill="#5f5f5f" stroke-width="6"/>
          <path d="M775 478L1030 328Q1048 312 1066 320L1380 505" fill="none" stroke-width="5"/>
          <path d="M1068 335L1370 508" fill="none" stroke-width="4"/>
        </g>
        <path d="M1030 302Q1048 292 1068 302L1358 470Q1378 487 1360 500L1112 645Q1096 655 1078 645L785 474Q768 460 785 447z" fill="none" stroke-width="9"/>
        <ellipse cx="1071" cy="598" rx="54" ry="32" fill="#202020" stroke-width="8"/>
        <path d="M1053 572V630Q1022 624 1019 604Q1024 582 1053 572z" fill="#484848" stroke-width="5"/>
        <path d="M1022 590Q1036 570 1071 568T1120 590" fill="none" stroke-width="12"/>
      </svg>

      <svg class="cube" width="132" height="112" viewBox="150 230 396 336" font-family="Roboto, sans-serif" font-weight="700" fill="#999" stroke-width="3">
        <ellipse cx="348" cy="432" rx="193" ry="126" fill="#f2f2f2" stroke="#ccc"/>
        <ellipse cx="348" cy="432" rx="148" ry="90" fill="#fff" stroke="#ccc"/>
        <ellipse cx="348" cy="430" rx="142" ry="80" fill="url(#shade)"/>
        <g font-size="58" fill="#ddd" stroke="#aaa"><text transform="matrix(.8 -.5 .7 .5 208 372)">W</text><text transform="matrix(.8 .5 -.7 .5 456 348)">N</text><text transform="matrix(.85 -.4 .6 .75 184 526)">S</text><text transform="matrix(.8 .5 -.6 .7 474 506)">E</text></g>
        <path d="M244 291L348 350V470L250 406z" fill="url(#cf)" stroke="#aaa"/>
        <path d="M452 291L348 350V470L446 406z" fill="url(#cf)" stroke="#aaa"/>
        <path d="M244 291L348 240L452 291L348 350z" fill="#f0f0f0" stroke="#aaa"/>
        <path d="M348 350V470M244 291L348 350L452 291" fill="none" stroke="#888"/>
        <path d="M328 340l20-12 20 12v22l-20 10-20-10z" fill="#ddd" opacity=".6"/>
        <g font-size="36"><text transform="matrix(.68 .4 0 1 260 374)">FRONT</text><text transform="matrix(.68 -.4 0 1 369 410)">RIGHT</text><text transform="matrix(.6 .36 -.6 .4 338 288)" font-size="38">TOP</text></g>
      </svg>

      <div class="navbox d-flex flex-column align-items-center">
        <svg width="32" height="114" viewBox="0 0 32 114"><circle cx="26" cy="5" r="4" fill="#bbb"/><path d="M24 3l4 4M28 3l-4 4" stroke="#fff"/><path d="M5 30a11 11 0 0 1 11-11h11v11a11 11 0 0 1-22 0z" fill="#eceef0" stroke="#999"/><circle cx="16" cy="30" r="6" fill="#fff" stroke="#999"/><circle cx="16" cy="30" r="8" fill="none" stroke="#bbb"/><path d="M13 49h6l-3 4zM13 91h6l-3 4z" fill="#999"/><path d="M3 56.500h26" stroke="#bbb"/><use href="#magbox" x="8" y="64" width="17" height="17"/><circle cx="26" cy="108" r="4" fill="#bbb"/><path d="M24 108h4" stroke="#fff" stroke-width="2"/></svg>
      </div>
    </div>
    <div class="vscroll d-flex flex-column align-items-center">
      <svg class="my-1" width="9" height="9"><path d="M1 7l3.500-4L8 7" fill="none" stroke="#444" stroke-width="2"/></svg>
      <div class="flex-fill w-100 d-flex flex-column justify-content-center"><div class="vthumb"></div></div>
      <svg class="my-1" width="9" height="9"><path d="M1 2l3.500 4L8 2" fill="none" stroke="#444" stroke-width="2"/></svg>
    </div>
  </div>
  <div class="viewbar d-flex align-items-center">
    <button class="scale">1/8" = 1'-0"</button>
    <button class="ic" aria-label="Detail level"><svg width="16" height="16"><path d="M.5 2.500h15v10H.500z" fill="#fff" stroke="#333"/><path d="M1 4.500h14M2 6.500h14M1 8.500h14M2 10.500h14" stroke="#444" stroke-dasharray="1 1"/></svg></button>
    <button class="ic" aria-label="Visual style"><svg width="16" height="16"><path d="M1 6l4-4h10v7l-4 5H1z" fill="#8fcaf2" stroke="#0a62b8"/><path d="M1 6h10v8M11 6l4-4" fill="none" stroke="#0a62b8"/><path d="M3 9h6" stroke="#e33" stroke-width="2"/><path d="M3 12h6" stroke="#3b3" stroke-width="2"/></svg></button>
    <button class="ic" aria-label="Sun path off"><svg width="16" height="16"><circle cx="7" cy="7" r="4" fill="#ffe27a" stroke="#d48a00"/><path d="M7 0v2M0 7h2M2 2l1 1M12 2l-1 1M2 12l1-1" stroke="#d48a00"/><use href="#redx" x="7" y="6" width="9" height="9"/></svg></button>
    <button class="ic" aria-label="Shadows off"><svg width="16" height="16"><circle cx="6" cy="6" r="4.500" fill="#dff0ff" stroke="#2a85e0"/><path d="M2 13h6" stroke="#555" stroke-width="2"/><use href="#redx" x="7" y="6" width="9" height="9"/></svg></button>
    <button class="ic" aria-label="Render"><svg width="17" height="16"><path d="M1 4l3 2 1 6h6l1-7H4M6 3h3" fill="#eee" stroke="#444"/><use href="#sbulb" x="6" y="2" width="14" height="14"/></svg></button>
    <button class="ic" aria-label="Crop off"><svg width="16" height="16"><path d="M3 14V3h13M6 14V6h10M0 10h4" stroke="#0a62b8" fill="none" stroke-width="1.500"/><use href="#redx" x="6" y="5" width="10" height="10"/></svg></button>
    <button class="ic" aria-label="Show crop region"><svg width="16" height="16"><path d="M3 14V3h9M6 14V6h5M0 10h4" stroke="#0a62b8" fill="none" stroke-width="1.500"/><use href="#sbulb" x="5" y="1" width="15" height="14"/></svg></button>
    <button class="ic" aria-label="Lock view"><svg width="16" height="16"><use href="#house" width="15" height="14"/><path d="M8 9h7v6H8z" fill="#7fae9a" stroke="#333"/><path d="M10 9V7h4v2" fill="none" stroke="#333"/></svg></button>
    <button class="ic" aria-label="Temporary hide"><svg width="16" height="16"><path d="M0 5h2l1 2M3 7q-1 5 2 5t4-4q2 2 4 1t2-5l-3-2M3 8q3-2 6 0" fill="none" stroke="#333"/></svg></button>
    <button class="ic" aria-label="Reveal hidden"><svg width="16" height="16"><use href="#sbulb"/></svg></button>
    <button class="ic" aria-label="View properties"><svg width="16" height="16"><path d="M1.500 3.500h12v10h-12z" fill="#fff" stroke="#111" stroke-width="2" stroke-dasharray="2 1"/><path d="M8 7h6v7H8z" fill="#fff" stroke="#111" stroke-dasharray="2 1"/></svg></button>
    <button class="ic" aria-label="Analytical model"><svg width="16" height="16"><path d="M1 6l3-3h8v7M1 6h8v8M3 6v8M6 6v8M12 3l-3 3M1 9h8" fill="none" stroke="#333"/><path d="M3 9h4v5" stroke="#c33" fill="none"/><use href="#sbulb" x="5" y="1" width="14" height="14"/></svg></button>
    <button class="ic" aria-label="Displacement"><svg width="16" height="16"><path d="M1 7l2-2h6v7l-2 2H1zM1 7h6v7M5 5l2-3h7v7l-2 2H9" fill="#ddd" stroke="#444"/></svg></button>
    <button class="ic" aria-label="Constraints"><svg width="17" height="16"><path d="M1.500 1v12M15.500 1v6M2 4h13" stroke="#333" fill="none"/><path d="M2 12h8" stroke="#333" stroke-dasharray="2 1"/><path d="M10 9h6v5h-6z" fill="#555"/></svg></button>
    <button aria-label="Scroll left"><svg width="9" height="9"><path d="M7 1L3 4.500 7 8" fill="none" stroke="#444" stroke-width="2"/></svg></button>
    <div class="flex-fill d-flex justify-content-center"><div class="hthumb"></div></div>
    <button class="me-1" aria-label="Scroll right"><svg width="9" height="9"><path d="M2 1l4 3.500L2 8" fill="none" stroke="#444" stroke-width="2"/></svg></button>
    <svg class="ms-1" width="10" height="10"><path d="M8 1v8M5 4v5M2 7v2" stroke="#bbb" stroke-width="2" stroke-dasharray="2 1"/></svg>
  </div>
</section>

<aside class="props d-flex flex-column">
  <div class="ptitle d-flex align-items-center justify-content-between"><span>Properties</span><button aria-label="Close"><svg width="12" height="12"><use href="#x"/></svg></button></div>
  <div class="ptype d-flex align-items-center"><div class="pthumb d-flex align-items-center justify-content-center"><svg width="32" height="32"><use href="#house"/></svg></div><span class="ms-1">3D View</span><span class="caret wide ms-auto"></span></div>
  <div class="psel-row d-flex align-items-center"><select class="pselect" aria-label="View instance"><option>3D View: {3D}</option></select>
    <button class="tool ms-auto me-2"><svg width="16" height="16"><path d="M1 2l2-1h4v5H1zM9 2l2-1h4v5H9zM1 9l1-1h5v6H1z" fill="#fff" stroke="#333"/><path d="M9 7h6v8H9z" fill="#fff" stroke="#333"/><path d="M10 8h4v3h-4z" fill="#0a62b8"/></svg>Edit Type</button></div>
  <div class="grid-box flex-fill">
  <table class="ptab">
    <colgroup><col class="c-name"><col><col class="c-pin"></colgroup>
    <tbody>
    <tr class="grp"><th colspan="3"><div class="d-flex justify-content-between align-items-center">Graphics<svg width="7" height="9"><path d="M1 4l2.500-3L6 4M1 8l2.500-3L6 8" fill="none" stroke="#000" stroke-width="1.500"/></svg></div></th></tr>
    <tr><th><label for="vs">View Scale</label></th><td class="ctl"><input id="vs" class="vsel" value="1/8&quot; = 1'-0"></td><td></td></tr>
    <tr class="off"><th>Scale Value &nbsp;&nbsp; 1:</th><td>96</td><td></td></tr>
    <tr><th>Detail Level</th><td>Fine</td><td></td></tr>
    <tr><th>Parts Visibility</th><td>Show Both</td><td></td></tr>
    <tr><th>Visibility/Graphics ...</th><td class="ctl"><button class="ebtn">Edit...</button></td><td></td></tr>
    <tr><th>Graphic Display Opt...</th><td class="ctl"><button class="ebtn">Edit...</button></td><td></td></tr>
    <tr><th>Discipline</th><td>Coordination</td><td></td></tr>
    <tr><th>Show Hidden Lines</th><td>By Discipline</td><td></td></tr>
    <tr><th>Default Analysis Dis...</th><td>None</td><td></td></tr>
    <tr><th><label for="k1">Sun Path</label></th><td class="ctl"><input type="checkbox" id="k1"></td><td></td></tr>
    <tr class="grp"><th colspan="3"><div class="d-flex justify-content-between align-items-center">Extents<svg width="7" height="9"><path d="M1 4l2.500-3L6 4M1 8l2.500-3L6 8" fill="none" stroke="#000" stroke-width="1.500"/></svg></div></th></tr>
    <tr><th><label for="k2">Crop View</label></th><td class="ctl"><input type="checkbox" id="k2"></td><td></td></tr>
    <tr><th><label for="k3">Crop Region Visible</label></th><td class="ctl"><input type="checkbox" id="k3"></td><td></td></tr>
    <tr><th><label for="k4">Annotation Crop</label></th><td class="ctl"><input type="checkbox" id="k4"></td><td></td></tr>
    <tr><th><label for="k5">Far Clip Active</label></th><td class="ctl"><input type="checkbox" id="k5"></td><td></td></tr>
    <tr class="off"><th>Far Clip Offset</th><td>1000'&nbsp; 0"</td><td></td></tr>
    <tr><th>Scope Box</th><td>None</td><td></td></tr>
    <tr><th><label for="k6">Section Box</label></th><td class="ctl"><input type="checkbox" id="k6"></td><td></td></tr>
    <tr class="grp"><th colspan="3"><div class="d-flex justify-content-between align-items-center">Camera<svg width="7" height="9"><path d="M1 4l2.500-3L6 4M1 8l2.500-3L6 8" fill="none" stroke="#000" stroke-width="1.500"/></svg></div></th></tr>
    <tr><th>Rendering Settings</th><td class="ctl"><button class="ebtn">Edit...</button></td><td></td></tr>
    <tr class="off"><th><label for="k7">Locked Orientation</label></th><td class="ctl"><input type="checkbox" id="k7" disabled></td><td></td></tr>
    <tr><th>Projection Mode</th><td>Orthographic</td><td></td></tr>
    <tr><th>Eye Elevation</th><td>97'&nbsp; 8 31/64"</td><td></td></tr>
    <tr><th>Target Elevation</th><td>4'&nbsp; 11 35/64"</td><td></td></tr>
    <tr class="off"><th>Camera Position</th><td>Adjusting</td><td></td></tr>
    <tr class="grp"><th colspan="3"><div class="d-flex justify-content-between align-items-center">Identity Data<svg width="7" height="9"><path d="M1 4l2.500-3L6 4M1 8l2.500-3L6 8" fill="none" stroke="#000" stroke-width="1.500"/></svg></div></th></tr>
    <tr><th>View Template</th><td class="ctl"><button class="ebtn">&lt;None&gt;</button></td><td></td></tr>
    <tr><th>View Name</th><td>{3D}</td><td></td></tr>
    <tr class="off"><th>Dependency</th><td>Independent</td><td></td></tr>
    <tr><th>Title on Sheet</th><td></td><td></td></tr>
    <tr class="grp"><th colspan="3"><div class="d-flex justify-content-between align-items-center">Phasing<svg width="7" height="9"><path d="M1 4l2.500-3L6 4M1 8l2.500-3L6 8" fill="none" stroke="#000" stroke-width="1.500"/></svg></div></th></tr>
    <tr><th>Phase Filter</th><td>Show All</td><td></td></tr>
    <tr><th>Phase</th><td>New Constr...</td><td></td></tr>
    </tbody>
  </table>
  </div>
  <div class="pfoot d-flex align-items-center justify-content-between"><a href="#">Properties help</a><button class="apply" disabled>Apply</button></div>
</aside>
</main>
<div class="status"></div>
</div>
<div class="edge d-flex flex-column flex-shrink-0"><div class="edge-top"></div><div class="edge-mid"></div><div class="edge-thumb"></div><div class="edge-rest flex-fill"></div></div>
</div>
<script src="https://cdn.jsdelivr.net/npm/bootstrap@5.3.0/dist/js/bootstrap.bundle.min.js"></script>
</body>
</html>
